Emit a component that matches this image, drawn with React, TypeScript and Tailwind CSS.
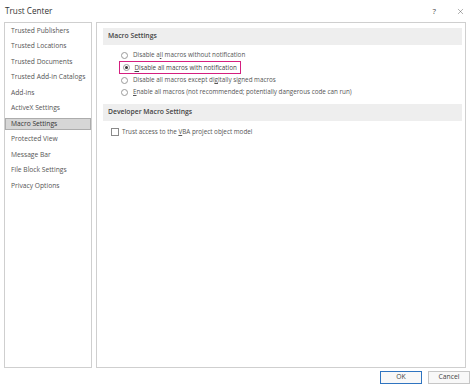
import { X } from "lucide-react";

const navItems = [
  "Trusted Publishers",
  "Trusted Locations",
  "Trusted Documents",
  "Trusted Add-in Catalogs",
  "Add-ins",
  "ActiveX Settings",
  "Macro Settings",
  "Protected View",
  "Message Bar",
  "File Block Settings",
  "Privacy Options",
];

function Radio({ checked }: { checked?: boolean }) {
  return (
    <span className="w-[7px] h-[7px] rounded-full border border-[#9a9a9a] bg-white flex items-center justify-center shrink-0">
      {checked && <span className="w-[3px] h-[3px] rounded-full bg-[#333]" />}
    </span>
  );
}

function SectionHeader({ children }: { children: string }) {
  return (
    <div className="h-[17px] bg-[#eeeeee] flex items-center pl-[5px] text-[6.8px] font-semibold text-[#444]">
      {children}
    </div>
  );
}

export default function App() {
  return (
    <div
      className="w-[474px] h-[389px] bg-white text-[#555] flex flex-col overflow-hidden"
      style={{ fontFamily: '"Open Sans", "Noto Sans", sans-serif' }}
    >
      <div className="h-[22px] flex items-center pl-[5px] pr-[9px]">
        <span className="text-[8.2px] text-[#333]">Trust Center</span>
        <span className="ml-auto text-[8px] text-[#444] mr-[20px]">?</span>
        <X size={9} strokeWidth={1.1} className="text-[#444]" />
      </div>

      <div className="flex h-[346px] pl-[4px] gap-[4px]">
        <div className="w-[88px] border border-[#cfcfcf] flex flex-col">
          {navItems.map((item) =>
            item === "Macro Settings" ? (
              <div key={item} className="h-[15.5px] flex items-center">
                <div className="h-[12px] w-full flex items-center pl-[5px] bg-[#d6d6d6] border border-[#acacac] text-[#333]">
                  <span className="text-[6.7px]">{item}</span>
                </div>
              </div>
            ) : (
              <div key={item} className="h-[15.5px] flex items-center pl-[6px]">
                <span className="text-[6.7px] whitespace-nowrap">{item}</span>
              </div>
            )
          )}
        </div>

        <div className="w-[370px] border border-[#cfcfcf] pt-[5px] pl-[6px] pr-[3px]">
          <SectionHeader>Macro Settings</SectionHeader>
          <div className="flex flex-col pt-[4px] pl-[17px] text-[6.3px] whitespace-nowrap">
            <div className="h-[12px] flex items-center gap-[5px] pl-[1px]">
              <Radio />
              <span>
                Disable a<u>l</u>l macros without notification
              </span>
            </div>
            <div className="h-[13px] flex items-center gap-[5px] pl-[3px] pr-[3px] border-[1.5px] border-[#d41f7f] w-fit -ml-[1.5px]">
              <Radio checked />
              <span className="text-[#444]">
                <u>D</u>isable all macros with notification
              </span>
            </div>
            <div className="h-[12px] flex items-center gap-[5px] pl-[1px]">
              <Radio />
              <span>
                Disable all macros except di<u>g</u>itally signed macros
              </span>
            </div>
            <div className="h-[12px] flex items-center gap-[5px] pl-[1px]">
              <Radio />
              <span>
                <u>E</u>nable all macros (not recommended; potentially dangerous code can run)
              </span>
            </div>
          </div>

          <div className="mt-[6px]">
            <SectionHeader>Developer Macro Settings</SectionHeader>
          </div>
          <div className="flex items-center gap-[3px] pl-[8px] mt-[6px] h-[10px] text-[6.3px]">
            <span className="w-[8px] h-[8px] border border-[#8a8a8a] bg-white shrink-0" />
            <span>
              Trust access to the <u>V</u>BA project object model
            </span>
          </div>
        </div>
      </div>

      <div className="flex justify-end gap-[6px] pr-[4px] pt-[3px]">
        <button className="w-[42px] h-[13px] border border-[#2f74c0] bg-[#f8f8f8] text-[6.8px] text-[#444] flex items-center justify-center">
          OK
        </button>
        <button className="w-[42px] h-[13px] border border-[#c6c6c6] bg-[#f8f8f8] text-[6.8px] text-[#444] flex items-center justify-center">
          Cancel
        </button>
      </div>
    </div>
  );
}
